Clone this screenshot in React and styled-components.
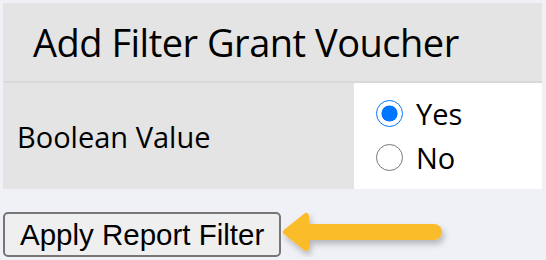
import styled, { createGlobalStyle } from "styled-components";

const GlobalStyle = createGlobalStyle`
  html, body {
    margin: 0;
    padding: 0;
    background: #f0f1f7;
  }
  body {
    font-family: "Open Sans", "DejaVu Sans", sans-serif;
  }
`;

const Page = styled.div`
  padding: 3px 4px 0 3px;
`;

const Panel = styled.div`
  background: #e4e4e4;
  width: 539px;
`;

const Header = styled.h2`
  margin: 0;
  height: 78px;
  padding-left: 30px;
  display: flex;
  align-items: center;
  font-size: 38px;
  font-weight: 400;
  letter-spacing: -0.5px;
  color: #000;
  border-bottom: 2px solid #d9d9d9;
`;

const Row = styled.div`
  display: grid;
  grid-template-columns: 351px 1fr;
  height: 106px;
`;

const Label = styled.div`
  display: flex;
  align-items: center;
  padding-left: 14px;
  font-size: 29px;
  color: #000;
`;

const Options = styled.div`
  background: #fff;
  display: flex;
  flex-direction: column;
  justify-content: center;
  gap: 17px;
  padding-left: 22px;
  padding-bottom: 2px;
`;

const Option = styled.label`
  display: flex;
  align-items: center;
  gap: 13px;
  font-size: 29px;
  line-height: 27px;
  color: #000;
`;

const Radio = styled.input`
  width: 27px;
  height: 27px;
  margin: 0;
`;

const Actions = styled.div`
  display: flex;
  align-items: center;
  margin-top: 23px;
`;

const Button = styled.button`
  font-family: "Liberation Sans", Arial, sans-serif;
  font-size: 29.5px;
  height: 45px;
  padding: 0 15px;
  background: #efefef;
  border: 2px solid #767676;
  border-radius: 5px;
  color: #000;
`;

const Arrow = () => (
  <svg width="170" height="45" viewBox="0 0 170 45" style={{ marginLeft: 1 }}>
    <defs>
      <filter id="sh" x="-20%" y="-50%" width="140%" height="200%">
        <feDropShadow dx="2" dy="4" stdDeviation="3" floodColor="#000" floodOpacity="0.25" />
      </filter>
    </defs>
    <g filter="url(#sh)" fill="#fbbc2a" stroke="#fbbc2a" strokeLinejoin="round" strokeLinecap="round">
      <line x1="20" y1="20" x2="152" y2="20" strokeWidth="16" />
      <polygon points="4,20 24,4 24,36" strokeWidth="6" />
    </g>
  </svg>
);

export default function App() {
  return (
    <Page>
      <GlobalStyle />
      <Panel>
        <Header>Add Filter Grant Voucher</Header>
        <Row>
          <Label>Boolean Value</Label>
          <Options>
            <Option>
              <Radio type="radio" name="bool" defaultChecked />
              Yes
            </Option>
            <Option>
              <Radio type="radio" name="bool" />
              No
            </Option>
          </Options>
        </Row>
      </Panel>
      <Actions>
        <Button>Apply Report Filter</Button>
        <Arrow />
      </Actions>
    </Page>
  );
}
